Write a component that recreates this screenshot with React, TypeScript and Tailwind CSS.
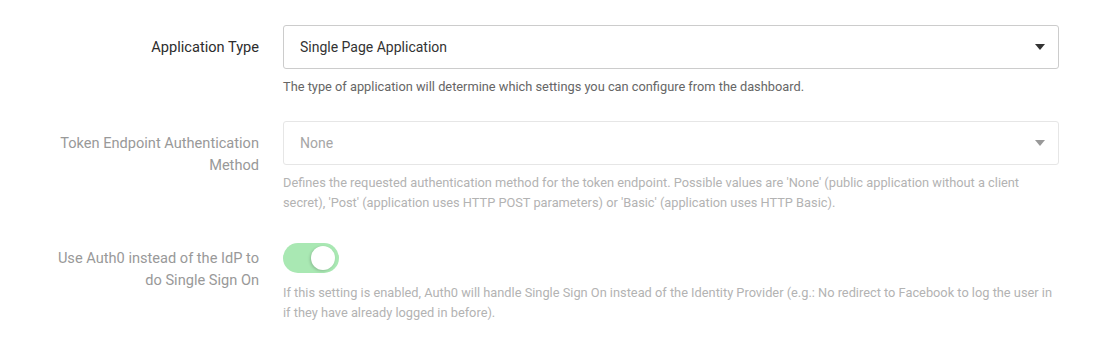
import React from "react";

function Caret({ color }: { color: string }) {
  return (
    <svg width="10" height="6" viewBox="0 0 10 6" className="shrink-0">
      <path d="M0 0 H10 L5 6 Z" fill={color} />
    </svg>
  );
}

export default function App() {
  return (
    <div
      className="w-[1117px] h-[347px] bg-white"
      style={{ fontFamily: "Roboto, 'Noto Sans', sans-serif" }}
    >
      <div className="flex flex-col pt-[25px]">
        {/* Row 1 */}
        <div className="flex">
          <div className="w-[259px] pt-[11px] text-right text-[14.6px] leading-[22px] text-[#2d2d2d]">
            Application Type
          </div>
          <div className="ml-[24px] w-[776px]">
            <div className="h-[44px] rounded-[3px] border border-[#cccccc] flex items-center justify-between pl-[16px] pr-[13px] text-[14px] text-[#333333]">
              <span>Single Page Application</span>
              <Caret color="#333333" />
            </div>
            <div className="mt-[8px] text-[12.8px] leading-[20px] text-[#666666]">
              The type of application will determine which settings you can configure from the dashboard.
            </div>
          </div>
        </div>

        {/* Row 2 */}
        <div className="flex mt-[24px]">
          <div className="w-[259px] pt-[11px] text-right text-[14.6px] leading-[22px] text-[#999999]">
            Token Endpoint Authentication
            <br />
            Method
          </div>
          <div className="ml-[24px] w-[776px]">
            <div className="h-[44px] rounded-[3px] border border-[#e6e6e6] flex items-center justify-between pl-[16px] pr-[13px] text-[14px] text-[#a6a6a6]">
              <span>None</span>
              <Caret color="#999999" />
            </div>
            <div className="mt-[8px] text-[12.8px] leading-[20px] text-[#b3b3b3]">
              Defines the requested authentication method for the token endpoint. Possible values are 'None' (public application without a client secret), 'Post' (application uses HTTP POST parameters) or 'Basic' (application uses HTTP Basic).
            </div>
          </div>
        </div>

        {/* Row 3 */}
        <div className="flex mt-[30px]">
          <div className="w-[259px] pt-[4px] text-right text-[14.6px] leading-[22px] text-[#999999]">
            Use Auth0 instead of the IdP to
            <br />
            do Single Sign On
          </div>
          <div className="ml-[24px] w-[776px]">
            <div className="relative w-[56px] h-[30px] rounded-full bg-[#a9e8b3]">
              <div className="absolute right-[4px] top-[3px] w-[24px] h-[24px] rounded-full bg-white shadow-[-1px_1px_3px_rgba(0,0,0,0.18)]" />
            </div>
            <div className="mt-[10px] text-[12.8px] leading-[20px] text-[#b3b3b3]">
              If this setting is enabled, Auth0 will handle Single Sign On instead of the Identity Provider (e.g.: No redirect to Facebook to log the user in if they have already logged in before).
            </div>
          </div>
        </div>
      </div>
    </div>
  );
}
